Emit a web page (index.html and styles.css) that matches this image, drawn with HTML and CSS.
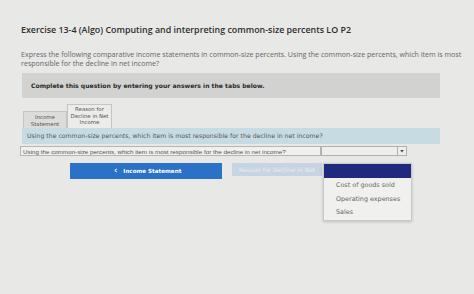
FILE: index.html
```html
<!DOCTYPE html>
<html>
<head>
<meta charset="utf-8">
<link rel="stylesheet" href="styles.css">
</head>
<body>
<div class="page">
  <h1 class="title">Exercise 13-4 (Algo) Computing and interpreting common-size percents LO P2</h1>
  <p class="intro">Express the following comparative income statements in common-size percents. Using the common-size percents, which item is most responsible for the decline in net income?</p>
  <div class="instruct">Complete this question by entering your answers in the tabs below.</div>
  <div class="tabs">
    <div class="tab">Income<br>Statement</div>
    <div class="tab active">Reason for<br>Decline in Net<br>Income</div>
  </div>
  <div class="question">Using the common-size percents, which item is most responsible for the decline in net income?</div>
  <div class="answer-row">
    <div class="answer-text">Using the common-size percents, which item is most responsible for the decline in net income?</div>
    <div class="select">
      <span class="arrow">
        <svg width="6" height="6" viewBox="0 0 6 6"><path d="M1 2 L5 2 L3 4.5 Z" fill="#555"/></svg>
      </span>
      <div class="menu">
        <div class="opt selected"></div>
        <div class="opt">Cost of goods sold</div>
        <div class="opt">Operating expenses</div>
        <div class="opt">Sales</div>
      </div>
    </div>
  </div>
  <div class="nav">
    <div class="btn prev"><span class="chev">&lsaquo;</span>Income Statement</div>
    <div class="btn next">Reason for Decline in Net</div>
  </div>
</div>
</body>
</html>
```
FILE: styles.css
```css
html, body {
  margin: 0;
  padding: 0;
  background: #e8e8e6;
}
.page {
  width: 474px;
  height: 294px;
  box-sizing: border-box;
  padding: 24px 0 0 21px;
  font-family: "Open Sans", "DejaVu Sans", sans-serif;
  color: #333;
}
.title {
  margin: 0;
  font-size: 8.9px;
  font-weight: 600;
  color: #2e2e2e;
  line-height: 12px;
}
.intro {
  margin: 14px 0 0 0;
  width: 450px;
  font-size: 7.1px;
  line-height: 8.5px;
  color: #666;
}
.instruct {
  margin: 6px 0 0 1px;
  width: 418px;
  height: 25px;
  box-sizing: border-box;
  padding: 9px 0 0 9px;
  background: #d2d2d0;
  font-family: "DejaVu Sans", Verdana, sans-serif;
  font-size: 6.1px;
  font-weight: bold;
  color: #2a2a2a;
}
.tabs {
  display: flex;
  align-items: flex-end;
  margin: 6px 0 0 2px;
  height: 24px;
}
.tab {
  box-sizing: border-box;
  width: 44px;
  height: 17px;
  padding-top: 2px;
  border: 1px solid #c4c4c4;
  border-bottom: none;
  background: #dcdcda;
  font-family: "DejaVu Sans", Verdana, sans-serif;
  font-size: 5.4px;
  line-height: 6.6px;
  text-align: center;
  color: #555;
}
.tab.active {
  width: 45px;
  height: 24px;
  padding-top: 1px;
  background: #ececea;
}
.question {
  margin-left: 1px;
  width: 418px;
  height: 16px;
  box-sizing: border-box;
  padding: 4px 0 0 5px;
  background: #c6dbe2;
  font-family: "DejaVu Sans", Verdana, sans-serif;
  font-size: 6.2px;
  color: #4e5a60;
}
.answer-row {
  display: flex;
  margin: 2px 0 0 -1px;
  height: 10px;
}
.answer-text {
  box-sizing: border-box;
  width: 301px;
  height: 10px;
  border: 1px solid #b5b5b5;
  background: #f0f0ee;
  padding: 1px 0 0 2px;
  font-family: "Liberation Sans", Arial, sans-serif;
  font-size: 6.25px;
  color: #555;
  white-space: nowrap;
  overflow: hidden;
}
.select {
  position: relative;
  box-sizing: border-box;
  width: 86px;
  height: 10px;
  border: 1px solid #b0b0b0;
  background: #eeeeec;
}
.arrow {
  position: absolute;
  right: 0;
  top: 0;
  width: 8px;
  height: 8px;
  border-left: 1px solid #b0b0b0;
  display: flex;
  align-items: center;
  justify-content: center;
}
.menu {
  position: absolute;
  left: 1px;
  top: 16px;
  width: 89px;
  height: 58px;
  box-sizing: border-box;
  border: 1px solid #c9c9c9;
  background: #f0f0ee;
  box-shadow: 0 1px 3px rgba(0,0,0,0.18);
  font-family: "DejaVu Sans", Verdana, sans-serif;
  font-size: 6.4px;
  font-weight: normal;
  color: #666;
}
.opt {
  height: 13.5px;
  line-height: 13.5px;
  padding-left: 12px;
}
.opt.selected {
  height: 14px;
  background: #1f2a7e;
  margin-bottom: 1px;
}
.nav {
  display: flex;
  gap: 10px;
  margin: 7px 0 0 49px;
}
.btn {
  box-sizing: border-box;
  height: 16px;
  line-height: 16px;
  font-family: "DejaVu Sans", Verdana, sans-serif;
  font-size: 5.6px;
  font-weight: bold;
  color: #fff;
}
.prev {
  width: 152px;
  background: #2b72c6;
  padding-left: 44px;
}
.chev {
  font-size: 8px;
  margin-right: 6px;
}
.next {
  width: 90px;
  height: 13px;
  line-height: 13px;
  background: #c7d4e1;
  color: #e9eef4;
  font-size: 6px;
  font-weight: normal;
  padding-left: 7px;
  white-space: nowrap;
  overflow: hidden;
}
```
